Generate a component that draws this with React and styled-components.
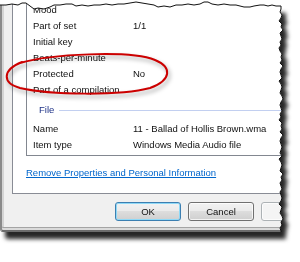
import React from 'react';
import styled, { createGlobalStyle } from 'styled-components';

const Global = createGlobalStyle`
  html, body { margin: 0; padding: 0; background: #fff; }
  body { font-family: "Liberation Sans", Arial, sans-serif; }
`;

const TOP = [
  [0, 5], [6, 5], [12, 4], [18, 5], [22, 3], [26, 3], [30, 6], [34, 9], [38, 8], [44, 9], [50, 7],
  [54, 5], [60, 5], [66, 4], [72, 4], [76, 6], [82, 5], [88, 6], [94, 5], [100, 5], [106, 4],
  [112, 5], [118, 4], [124, 4], [130, 3], [136, 2], [142, 3], [148, 4], [154, 5], [158, 7],
  [164, 6], [170, 7], [176, 5], [182, 5], [188, 4], [194, 5], [200, 4], [204, 2], [208, 2],
  [212, 4], [218, 5], [224, 4], [230, 5], [236, 5], [240, 6], [244, 7], [250, 7], [254, 6],
  [260, 5], [264, 5], [268, 6], [272, 5], [276, 6], [281, 6],
];
const OFFS = [0, -1, 1, 0, -2, 1, 0, 2, -1, 0, 1, -1, 0, -2, -1, 1, 0, 1, -1, 2, 0, -1, 0, 1, -2, 0, 1, 0, -1, 1, 2, 0, -1, 0, 1, -1, 0, -2, 1, 0, 1, -1, 2, 0, -1, 0, 1, 0, -1, 1, -2, 0, 1, 0, -1, 2, 0, 1, -1, 0, 1, -1, 0, 1, 0, -2, 1, 0, -1, 1, 2, 0, 1, -1, 0];
const RIGHT = OFFS.map((o, i) => [281 + o, 9 + i * 3]).filter(([, y]) => y < 232);
const EDGE = [...TOP, ...RIGHT, [281, 232]];
const CLIP = `polygon(${[...EDGE, [0, 232]].map(([x, y]) => `${x}px ${y}px`).join(', ')})`;

const Stage = styled.div`
  position: relative;
  width: 300px;
  height: 262px;
  overflow: hidden;
  background: #fff;
`;

const ShadowWrap = styled.div`
  width: 300px;
  height: 232px;
  filter: drop-shadow(5px 7px 2px rgba(0, 0, 0, 0.85));
`;

const Paper = styled.div`
  width: 300px;
  height: 232px;
  overflow: hidden;
  clip-path: ${(p) => p.$clip};
`;

const Dialog = styled.div`
  box-sizing: border-box;
  width: 340px;
  height: 232px;
  display: flex;
  flex-direction: column;
  background: #f0f0f0;
  border-left: 2px solid #8a8a8a;
  border-right: 2px solid #8a8a8a;
  border-bottom: 2px solid #6c6c6c;
  border-bottom-left-radius: 3px;
  box-shadow: inset 0 -2px 0 #dadada, inset 0 -3px 0 #a4a4a4, inset 2px 0 0 #d4d4d4;
  padding: 0 10px;
  font-size: 9.5px;
  color: #111;
`;

const Pane = styled.div`
  background: #fff;
  border: 1px solid #898c95;
  border-top: none;
  padding: 0 12px 13px 13px;
`;

const List = styled.div`
  background: #fff;
  border: 1px solid #828790;
  border-top: none;
  padding: 2px 0 2px;
`;

const Row = styled.div`
  display: grid;
  grid-template-columns: 100px 1fr;
  height: 16px;
  line-height: 16px;
  padding-left: 6px;
  white-space: nowrap;
`;

const Cell = styled.span`
  overflow: hidden;
`;

const GroupHeader = styled.div`
  display: flex;
  align-items: center;
  gap: 5px;
  height: 16px;
  line-height: 16px;
  padding: 4px 0 3px 12px;
  color: #1e3287;
`;

const HeaderLine = styled.div`
  flex: 1;
  height: 1px;
  background: #c2cff0;
`;

const Link = styled.a`
  display: block;
  margin-top: 10px;
  line-height: 14px;
  color: #0066cc;
  text-decoration: underline;
  white-space: nowrap;
`;

const ButtonRow = styled.div`
  display: flex;
  gap: 7px;
  padding-left: 103px;
  margin-top: 8px;
`;

const Button = styled.button`
  box-sizing: border-box;
  width: 66px;
  height: 19px;
  padding: 0;
  font-family: "Liberation Sans", Arial, sans-serif;
  font-size: 9.5px;
  color: ${(p) => (p.$disabled ? '#8a8a8a' : '#111')};
  border-radius: 3px;
  border: 1px solid ${(p) => (p.$default ? '#3c7fb1' : p.$disabled ? '#adb2b5' : '#707070')};
  background: ${(p) =>
    p.$disabled
      ? '#f4f4f4'
      : 'linear-gradient(#f2f2f2 0%, #ebebeb 45%, #dddddd 50%, #cfcfcf 100%)'};
  box-shadow: ${(p) =>
    p.$default ? 'inset 0 0 0 1px #8fd9f7' : 'inset 0 0 0 1px rgba(255,255,255,0.75)'};
`;

const Overlay = styled.svg`
  position: absolute;
  left: 0;
  top: 0;
  pointer-events: none;
`;

const Callout = styled.svg`
  position: absolute;
  left: 0;
  top: 0;
  pointer-events: none;
  filter: drop-shadow(2px 3px 2px rgba(0, 0, 0, 0.35));
`;

const rows = [
  ['Mood', ''],
  ['Part of set', '1/1'],
  ['Initial key', ''],
  ['Beats-per-minute', ''],
  ['Protected', 'No'],
  ['Part of a compilation', ''],
];
const fileRows = [
  ['Name', '11 - Ballad of Hollis Brown.wma'],
  ['Item type', 'Windows Media Audio file'],
];

export default function App() {
  return (
    <>
      <Global />
      <Stage>
        <ShadowWrap>
          <Paper $clip={CLIP}>
            <Dialog>
              <Pane>
                <List>
                  {rows.map(([k, v]) => (
                    <Row key={k}>
                      <Cell>{k}</Cell>
                      <Cell>{v}</Cell>
                    </Row>
                  ))}
                  <GroupHeader>
                    <span>File</span>
                    <HeaderLine />
                  </GroupHeader>
                  {fileRows.map(([k, v]) => (
                    <Row key={k}>
                      <Cell>{k}</Cell>
                      <Cell>{v}</Cell>
                    </Row>
                  ))}
                </List>
                <Link href="#">Remove Properties and Personal Information</Link>
              </Pane>
              <ButtonRow>
                <Button $default>OK</Button>
                <Button>Cancel</Button>
                <Button $disabled aria-label="Apply" />
              </ButtonRow>
            </Dialog>
          </Paper>
        </ShadowWrap>
        <Overlay width="300" height="262" viewBox="0 0 300 262">
          <polyline
            points={EDGE.map(([x, y]) => `${x},${y}`).join(' ')}
            fill="none"
            stroke="#111"
            strokeWidth="1"
          />
        </Overlay>
        <Callout width="300" height="262" viewBox="0 0 300 262">
          <path
            d="M 20 63 C 50 54, 130 50, 155 60 C 172 67, 172 80, 150 88 C 120 96, 50 95, 20 88 C 2 83, 2 70, 22 62"
            fill="none"
            stroke="#cc0000"
            strokeWidth="2"
            strokeLinecap="round"
          />
        </Callout>
      </Stage>
    </>
  );
}
